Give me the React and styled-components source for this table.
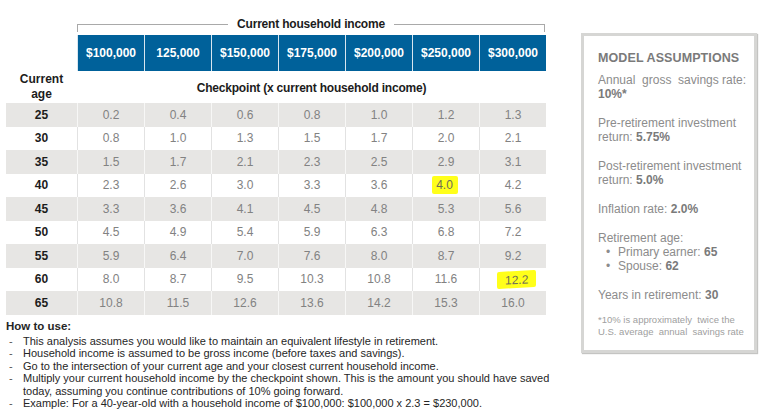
import React from "react";
import styled, { createGlobalStyle } from "styled-components";

const GlobalStyle = createGlobalStyle`
  body {
    margin: 0;
    background: #fff;
    font-family: "Liberation Sans", Arial, sans-serif;
  }
`;

const incomes = ["$100,000", "125,000", "$150,000", "$175,000", "$200,000", "$250,000", "$300,000"];

const rows = [
  ["25", "0.2", "0.4", "0.6", "0.8", "1.0", "1.2", "1.3"],
  ["30", "0.8", "1.0", "1.3", "1.5", "1.7", "2.0", "2.1"],
  ["35", "1.5", "1.7", "2.1", "2.3", "2.5", "2.9", "3.1"],
  ["40", "2.3", "2.6", "3.0", "3.3", "3.6", "4.0", "4.2"],
  ["45", "3.3", "3.6", "4.1", "4.5", "4.8", "5.3", "5.6"],
  ["50", "4.5", "4.9", "5.4", "5.9", "6.3", "6.8", "7.2"],
  ["55", "5.9", "6.4", "7.0", "7.6", "8.0", "8.7", "9.2"],
  ["60", "8.0", "8.7", "9.5", "10.3", "10.8", "11.6", "12.2"],
  ["65", "10.8", "11.5", "12.6", "13.6", "14.2", "15.3", "16.0"],
];

// cells marked with the yellow highlighter
const marks = { "40-6": "a", "60-7": "b" };

const howTo = [
  ["This analysis assumes you would like to maintain  an equivalent lifestyle in retirement."],
  ["Household income is assumed to be gross income (before taxes and savings)."],
  ["Go to the intersection of your current age and your closest current household income."],
  [
    "Multiply  your current household income by the checkpoint shown.  This is the amount  you should have saved",
    "today, assuming you continue contributions of 10% going forward.",
  ],
  ["Example: For a 40-year-old with  a household income of $100,000: $100,000 x 2.3 = $230,000."],
];

export default function App() {
  return (
    <Page>
      <GlobalStyle />
      <Left>
        <Grid>
          <Spacer />
          <Bracket>
            <BracketLine $side="left" />
            <BracketTitle>Current household income</BracketTitle>
            <BracketLine $side="right" />
          </Bracket>

          <Spacer />
          {incomes.map((inc) => (
            <HeadCell key={inc}>{inc}</HeadCell>
          ))}

          <AgeLabel>
            Current
            <br />
            age
          </AgeLabel>
          <CheckLabel>Checkpoint (x current household income)</CheckLabel>

          {rows.map((r, i) =>
            r.map((v, j) =>
              j === 0 ? (
                <AgeCell key={r[0] + j} $shade={i % 2 === 0}>
                  {v}
                </AgeCell>
              ) : (
                <Cell key={r[0] + j} $shade={i % 2 === 0}>
                  {marks[r[0] + "-" + j] ? (
                    <Mark $kind={marks[r[0] + "-" + j]}>{v}</Mark>
                  ) : (
                    v
                  )}
                </Cell>
              )
            )
          )}
        </Grid>

        <HowTo>
          <HowTitle>How to use:</HowTitle>
          <List>
            {howTo.map((lines, i) => (
              <Item key={i}>
                <Dash>-</Dash>
                <span>
                  {lines.map((l, k) => (
                    <Line key={k}>{l}</Line>
                  ))}
                </span>
              </Item>
            ))}
          </List>
        </HowTo>
      </Left>

      <Panel>
        <PanelTitle>MODEL ASSUMPTIONS</PanelTitle>
        <Para>
          Annual&nbsp; gross&nbsp; savings rate:
          <br />
          <B>10%*</B>
        </Para>
        <Para>
          Pre-retirement investment
          <br />
          return: <B>5.75%</B>
        </Para>
        <Para>
          Post-retirement investment
          <br />
          return: <B>5.0%</B>
        </Para>
        <Para>
          Inflation rate: <B>2.0%</B>
        </Para>
        <Para>
          Retirement age:
          <Bullets>
            <li>
              Primary earner: <B>65</B>
            </li>
            <li>
              Spouse: <B>62</B>
            </li>
          </Bullets>
        </Para>
        <Para>
          Years in retirement: <B>30</B>
        </Para>
        <Note>
          *10% is approximately&nbsp; twice the
          <br />
          U.S. average&nbsp; annual&nbsp; savings rate
        </Note>
      </Panel>
    </Page>
  );
}

const Page = styled.div`
  display: flex;
  align-items: flex-start;
  width: 768px;
  height: 416px;
  overflow: hidden;
`;

const Left = styled.div`
  padding-left: 6px;
  width: 539px;
`;

const Grid = styled.div`
  display: grid;
  grid-template-columns: 71px repeat(7, 67px);
`;

const Spacer = styled.div``;

const Bracket = styled.div`
  grid-column: span 7;
  display: flex;
  align-items: flex-start;
  margin-top: 17px;
  height: 18px;
`;

const BracketLine = styled.div`
  flex: 1;
  height: 7px;
  margin-top: 7px;
  border-top: 1px solid #a9a9a9;
  ${(p) => (p.$side === "left" ? "border-left: 1px solid #a9a9a9; margin-right: 9px;" : "border-right: 1px solid #a9a9a9; margin-left: 9px; margin-right: 1px;")}
`;

const BracketTitle = styled.div`
  font-size: 12px;
  font-weight: bold;
  color: #1c1c1c;
  letter-spacing: -0.2px;
  line-height: 14px;
`;

const HeadCell = styled.div`
  background: #00619a;
  color: #fff;
  font-size: 12px;
  font-weight: bold;
  height: 36px;
  display: flex;
  align-items: center;
  justify-content: center;
  border-left: 1px solid #d8e6f0;
  &:last-child {
    border-right: 1px solid #d8e6f0;
  }
`;

const AgeLabel = styled.div`
  font-size: 12px;
  font-weight: bold;
  color: #1c1c1c;
  text-align: center;
  line-height: 15px;
  height: 32px;
  display: flex;
  align-items: center;
  justify-content: center;
`;

const CheckLabel = styled.div`
  grid-column: span 7;
  font-size: 12px;
  font-weight: bold;
  color: #1c1c1c;
  letter-spacing: -0.2px;
  display: flex;
  align-items: center;
  justify-content: center;
  padding-top: 2px;
`;

const Cell = styled.div`
  height: 23.5px;
  display: flex;
  align-items: center;
  justify-content: center;
  font-size: 12px;
  color: #828282;
  background: ${(p) => (p.$shade ? "#e7e6e4" : "#fff")};
  border-left: 1px solid ${(p) => (p.$shade ? "#f7f7f6" : "#e2e2e2")};
`;

const AgeCell = styled(Cell)`
  font-weight: bold;
  color: #1c1c1c;
  border-left: none;
`;

const Mark = styled.span`
  background: #ffff1a;
  color: #6d6d57;
  border-radius: 2px;
  ${(p) =>
    p.$kind === "a"
      ? "padding: 2px 5px 2px 4px; margin-left: -2px;"
      : "padding: 2px 8px 1px 8px; margin-left: 8px; margin-top: 1px; transform: skewY(-3deg);"}
`;

const HowTo = styled.div`
  margin-top: 5px;
  font-size: 11px;
  color: #262626;
  line-height: 12.4px;
`;

const HowTitle = styled.div`
  font-weight: bold;
  font-size: 11.5px;
  margin-bottom: 3px;
`;

const List = styled.div`
  display: flex;
  flex-direction: column;
`;

const Item = styled.div`
  display: flex;
`;

const Dash = styled.span`
  width: 14px;
  padding-left: 3px;
  color: #555;
  flex: none;
`;

const Line = styled.span`
  display: block;
  white-space: nowrap;
`;

const Panel = styled.div`
  margin-left: 36px;
  margin-top: 33px;
  width: 176px;
  height: 320px;
  border: 3px solid #d6d6d4;
  box-shadow: 1px 1px 1px #c4c4c2;
  padding: 15px 0 0 14px;
  box-sizing: border-box;
  color: #8c8c8c;
  font-size: 12px;
  line-height: 14px;
`;

const PanelTitle = styled.div`
  font-weight: bold;
  color: #7a7a7a;
  font-size: 12.5px;
  letter-spacing: 0.1px;
  margin-bottom: 8px;
`;

const Para = styled.div`
  margin-bottom: 15px;
`;

const B = styled.b`
  color: #7a7a7a;
`;

const Bullets = styled.ul`
  margin: 0;
  padding-left: 20px;
  li {
    list-style: none;
    position: relative;
  }
  li::before {
    content: "•";
    position: absolute;
    left: -12px;
  }
`;

const Note = styled.div`
  font-size: 9.5px;
  line-height: 12px;
  color: #a0a0a0;
  margin-top: -3px;
`;
